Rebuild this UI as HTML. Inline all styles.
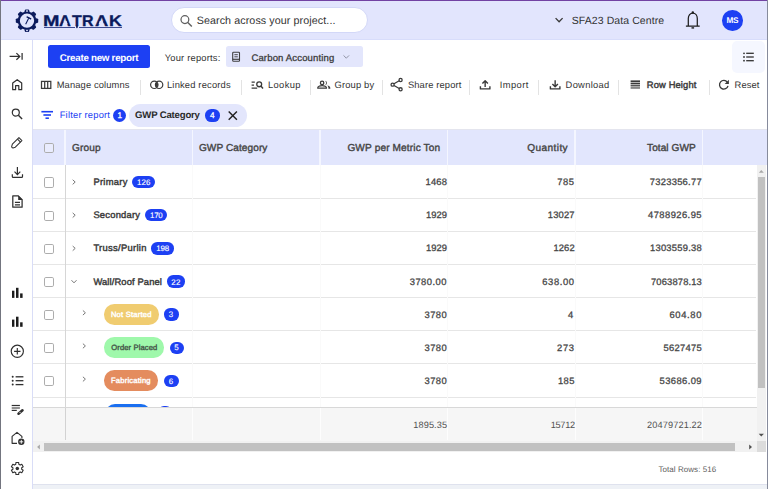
<!DOCTYPE html>
<html><head><meta charset="utf-8"><title>Matrak report</title>
<style>
html,body{margin:0;padding:0;background:#fff;}
body{width:768px;height:489px;position:relative;overflow:hidden;font-family:"Liberation Sans",sans-serif;text-rendering:geometricPrecision;}
.t{position:absolute;white-space:nowrap;}
.b{position:absolute;}
.ov{position:absolute;left:0;top:0;pointer-events:none;}
</style></head><body>
<div class="b" style="left:0px;top:0px;width:768px;height:40px;background:#e2e5fd;"></div>
<div class="b" style="left:0px;top:0px;width:768px;height:1.1px;background:#7242a3;"></div>
<div class="b" style="left:32px;top:40px;width:1px;height:449px;background:#d9ddf7;"></div>
<div class="b" style="left:33px;top:485px;width:735px;height:4px;background:#eef1f6;"></div>
<div class="b" style="left:33px;top:484.3px;width:735px;height:1.0px;background:#dfe2ee;"></div>
<span class="t" style="left:42.91px;top:11px;font-size:15.5px;line-height:22px;font-weight:bold;color:#0b1a5c;-webkit-text-stroke:0.3px #0b1a5c;"><b style="display:inline-block;width:16.43px;transform:scaleX(1.276);transform-origin:0 0">M</b><b style="display:inline-block;width:12.61px;transform:scaleX(1.059);transform-origin:0 0">A</b><b style="display:inline-block;width:10.52px;transform:scaleX(1.032);transform-origin:0 0">T</b><b style="display:inline-block;width:12.12px;transform:scaleX(1.030);transform-origin:0 0">R</b><b style="display:inline-block;width:14.36px;transform:scaleX(1.184);transform-origin:0 0">A</b><b style="display:inline-block;width:16.00px;transform:scaleX(1.150);transform-origin:0 0">K</b></span>
<div class="b" style="left:43.8px;top:26.9px;width:30.799999999999997px;height:1.6000000000000014px;background:#3d4a8f;"></div>
<div class="b" style="left:79px;top:26.9px;width:43.2px;height:1.6000000000000014px;background:#3d4a8f;"></div>
<div class="b" style="left:171px;top:7px;width:197px;height:26px;background:#fff;border:1px solid #d3d8f8;border-radius:13px;box-sizing:border-box"></div>
<span class="t" style="left:196.70px;top:13.00px;font-size:10.7px;line-height:17px;letter-spacing:0.097px;color:#333;">Search across your project...</span>
<div class="b" style="left:0px;top:39px;width:768px;height:1px;background:#d8ddfb;"></div>
<span class="t" style="left:571.70px;top:13.00px;font-size:10.5px;line-height:17px;letter-spacing:0.086px;color:#333;">SFA23 Data Centre</span>
<div class="b" style="left:722px;top:10px;width:20.600px;height:20.600px;border-radius:50%;background:#1d40f3"></div>
<span class="t" style="left:726.40px;top:14.00px;font-size:8.2px;line-height:13px;letter-spacing:-0.100px;color:#fff;font-weight:bold;">MS</span>
<div class="b" style="left:48px;top:45px;width:102px;height:23px;background:#1d40f3;border-radius:2.5px"></div>
<span class="t" style="left:59.80px;top:51.00px;font-size:9.8px;line-height:16px;letter-spacing:-0.289px;color:#fff;font-weight:bold;">Create new report</span>
<span class="t" style="left:164.70px;top:51.00px;font-size:9.35px;line-height:15px;letter-spacing:0.201px;color:#333;">Your reports:</span>
<div class="b" style="left:225.5px;top:46px;width:137.200px;height:21px;background:#e3e6fc;border-radius:2.500px"></div>
<span class="t" style="left:251.40px;top:51.00px;font-size:9.5px;line-height:15px;letter-spacing:0.166px;color:#3a3a3a;-webkit-text-stroke:0.28px #3a3a3a;">Carbon Accounting</span>
<div class="b" style="left:731.8px;top:40.6px;width:33.2px;height:32.6px;background:#f5f7ff;border-radius:5px"></div>
<span class="t" style="left:56.70px;top:78.00px;font-size:9.35px;line-height:15px;letter-spacing:0.129px;color:#333;">Manage columns</span>
<div class="b" style="left:139.8px;top:79.5px;width:1.0px;height:15.0px;background:#e3e3e3;"></div>
<span class="t" style="left:167.00px;top:78.00px;font-size:9.35px;line-height:15px;letter-spacing:0.177px;color:#333;">Linked records</span>
<div class="b" style="left:240.5px;top:79.5px;width:1.0px;height:15.0px;background:#e3e3e3;"></div>
<span class="t" style="left:267.90px;top:78.00px;font-size:9.35px;line-height:15px;letter-spacing:0.388px;color:#333;">Lookup</span>
<div class="b" style="left:309.6px;top:79.5px;width:1.0px;height:15.0px;background:#e3e3e3;"></div>
<span class="t" style="left:334.50px;top:78.00px;font-size:9.35px;line-height:15px;letter-spacing:0.168px;color:#333;">Group by</span>
<div class="b" style="left:382.1px;top:79.5px;width:1.0px;height:15.0px;background:#e3e3e3;"></div>
<span class="t" style="left:407.90px;top:78.00px;font-size:9.35px;line-height:15px;letter-spacing:0.136px;color:#333;">Share report</span>
<div class="b" style="left:468.8px;top:79.5px;width:1.0px;height:15.0px;background:#e3e3e3;"></div>
<span class="t" style="left:499.70px;top:78.00px;font-size:9.35px;line-height:15px;letter-spacing:0.417px;color:#333;">Import</span>
<div class="b" style="left:538.2px;top:79.5px;width:1.0px;height:15.0px;background:#e3e3e3;"></div>
<span class="t" style="left:565.60px;top:78.00px;font-size:9.35px;line-height:15px;letter-spacing:0.290px;color:#333;">Download</span>
<div class="b" style="left:618.0px;top:79.5px;width:1.0px;height:15.0px;background:#e3e3e3;"></div>
<span class="t" style="left:646.80px;top:78.00px;font-size:9.35px;line-height:15px;letter-spacing:0.137px;color:#3a3a3a;-webkit-text-stroke:0.42px #3a3a3a;">Row Height</span>
<div class="b" style="left:709.0px;top:79.5px;width:1.0px;height:15.0px;background:#e3e3e3;"></div>
<span class="t" style="left:734.60px;top:78.00px;font-size:9.35px;line-height:15px;letter-spacing:0.095px;color:#333;">Reset</span>
<span class="t" style="left:59.70px;top:108.00px;font-size:9.35px;line-height:15px;letter-spacing:0.208px;color:#1d40f3;">Filter report</span>
<div class="b" style="left:113.4px;top:108.700px;width:13px;height:13px;border-radius:50%;background:#1d40f3"></div>
<span class="t" style="left:117.60px;top:109.00px;font-size:8.2px;line-height:13px;letter-spacing:-0.460px;color:#fff;-webkit-text-stroke:0.3px #fff;">1</span>
<div class="b" style="left:128.800px;top:103.700px;width:117.900px;height:23.300px;border-radius:11.650px;background:#e3e6fc"></div>
<span class="t" style="left:135.00px;top:108.00px;font-size:9.6px;line-height:15px;letter-spacing:-0.186px;color:#2a2a2a;font-weight:bold;">GWP Category</span>
<div class="b" style="left:204.600px;top:109.100px;width:15.500px;height:12.600px;border-radius:6.300px;background:#1d40f3"></div>
<span class="t" style="left:210.00px;top:109.00px;font-size:8.2px;line-height:13px;letter-spacing:0.940px;color:#fff;-webkit-text-stroke:0.3px #fff;">4</span>
<div class="b" style="left:33px;top:129px;width:733.8px;height:1px;background:#e4e5ee;"></div>
<div class="b" style="left:33px;top:130.3px;width:733.8px;height:34.5px;background:#e2e6fd;"></div>
<div class="b" style="left:64.4px;top:130.2px;width:1.1999999999999886px;height:34.60000000000002px;background:#f4f6ff;"></div>
<div class="b" style="left:191.8px;top:130.2px;width:1.1999999999999886px;height:34.60000000000002px;background:#f4f6ff;"></div>
<div class="b" style="left:319.4px;top:130.2px;width:1.2000000000000455px;height:34.60000000000002px;background:#f4f6ff;"></div>
<div class="b" style="left:446.9px;top:130.2px;width:1.2000000000000455px;height:34.60000000000002px;background:#f4f6ff;"></div>
<div class="b" style="left:574.4px;top:130.2px;width:1.2000000000000455px;height:34.60000000000002px;background:#f4f6ff;"></div>
<div class="b" style="left:701.9px;top:130.2px;width:1.2000000000000455px;height:34.60000000000002px;background:#f4f6ff;"></div>
<div class="b" style="left:44.2px;top:143.10px;width:10.2px;height:10.2px;border:1.25px solid #adadad;border-radius:1.8px;box-sizing:border-box;background:#e9ecfe"></div>
<span class="t" style="left:71.90px;top:141.00px;font-size:10.1px;line-height:16px;letter-spacing:0.146px;color:#454545;-webkit-text-stroke:0.38px #454545;">Group</span>
<span class="t" style="left:198.90px;top:141.00px;font-size:10.1px;line-height:16px;letter-spacing:0.073px;color:#454545;-webkit-text-stroke:0.38px #454545;">GWP Category</span>
<span class="t" style="left:347.40px;top:141.00px;font-size:10.1px;line-height:16px;letter-spacing:0.131px;color:#454545;-webkit-text-stroke:0.38px #454545;">GWP per Metric Ton</span>
<span class="t" style="left:527.20px;top:141.00px;font-size:10.1px;line-height:16px;letter-spacing:0.411px;color:#454545;-webkit-text-stroke:0.38px #454545;">Quantity</span>
<span class="t" style="left:647.10px;top:141.00px;font-size:10.1px;line-height:16px;letter-spacing:0.048px;color:#454545;-webkit-text-stroke:0.38px #454545;">Total GWP</span>
<div class="b" style="left:33px;top:197.56px;width:723px;height:1.0px;background:#e6e6e6;"></div>
<div class="b" style="left:33px;top:230.72px;width:723px;height:1.0px;background:#e6e6e6;"></div>
<div class="b" style="left:33px;top:263.88px;width:723px;height:1.0px;background:#e6e6e6;"></div>
<div class="b" style="left:33px;top:297.03999999999996px;width:723px;height:1.0px;background:#e6e6e6;"></div>
<div class="b" style="left:33px;top:330.2px;width:723px;height:1.0px;background:#e6e6e6;"></div>
<div class="b" style="left:33px;top:363.36px;width:723px;height:1.0px;background:#e6e6e6;"></div>
<div class="b" style="left:33px;top:396.52px;width:723px;height:1.0px;background:#e6e6e6;"></div>
<div class="b" style="left:64.5px;top:164.8px;width:1.0px;height:242.5px;background:#d6d6d6;"></div>
<div class="b" style="left:191.9px;top:164.8px;width:1.0px;height:242.5px;background:#fafafa;"></div>
<div class="b" style="left:319.5px;top:164.8px;width:1.0px;height:242.5px;background:#fafafa;"></div>
<div class="b" style="left:447.0px;top:164.8px;width:1.0px;height:242.5px;background:#fafafa;"></div>
<div class="b" style="left:574.5px;top:164.8px;width:1.0px;height:242.5px;background:#fafafa;"></div>
<div class="b" style="left:702.0px;top:164.8px;width:1.0px;height:242.5px;background:#fafafa;"></div>
<div class="b" style="left:44.2px;top:177.35px;width:10.2px;height:10.2px;border:1.25px solid #adadad;border-radius:1.8px;box-sizing:border-box;background:#fff"></div>
<span class="t" style="left:93.40px;top:174.00px;font-size:9.4px;line-height:15px;letter-spacing:0.289px;color:#3a3a3a;-webkit-text-stroke:0.42px #3a3a3a;">Primary</span>
<div class="b" style="left:132.3px;top:175.70px;width:22.90px;height:12.5px;border-radius:6.25px;background:#1d40f3"></div>
<span class="t" style="left:136.90px;top:176.00px;font-size:7.9px;line-height:13px;letter-spacing:0.140px;color:#fff;-webkit-text-stroke:0.12px #fff;">126</span>
<span class="t" style="left:425.50px;top:174.00px;font-size:9.4px;line-height:15px;letter-spacing:0.173px;color:#464646;-webkit-text-stroke:0.3px #464646;">1468</span>
<span class="t" style="left:557.30px;top:174.00px;font-size:9.4px;line-height:15px;letter-spacing:0.573px;color:#464646;-webkit-text-stroke:0.3px #464646;">785</span>
<span class="t" style="left:649.70px;top:174.00px;font-size:9.4px;line-height:15px;letter-spacing:0.274px;color:#464646;-webkit-text-stroke:0.3px #464646;">7323356.77</span>
<div class="b" style="left:44.2px;top:210.51px;width:10.2px;height:10.2px;border:1.25px solid #adadad;border-radius:1.8px;box-sizing:border-box;background:#fff"></div>
<span class="t" style="left:93.40px;top:207.00px;font-size:9.4px;line-height:15px;letter-spacing:0.218px;color:#3a3a3a;-webkit-text-stroke:0.42px #3a3a3a;">Secondary</span>
<div class="b" style="left:145.2px;top:208.86px;width:22.20px;height:12.5px;border-radius:6.25px;background:#1d40f3"></div>
<span class="t" style="left:150.10px;top:209.00px;font-size:7.9px;line-height:13px;letter-spacing:-0.293px;color:#fff;-webkit-text-stroke:0.12px #fff;">170</span>
<span class="t" style="left:426.00px;top:207.00px;font-size:9.4px;line-height:15px;letter-spacing:0.048px;color:#464646;-webkit-text-stroke:0.3px #464646;">1929</span>
<span class="t" style="left:547.80px;top:207.00px;font-size:9.4px;line-height:15px;letter-spacing:0.153px;color:#464646;-webkit-text-stroke:0.3px #464646;">13027</span>
<span class="t" style="left:648.00px;top:207.00px;font-size:9.4px;line-height:15px;letter-spacing:0.444px;color:#464646;-webkit-text-stroke:0.3px #464646;">4788926.95</span>
<div class="b" style="left:44.2px;top:243.67px;width:10.2px;height:10.2px;border:1.25px solid #adadad;border-radius:1.8px;box-sizing:border-box;background:#fff"></div>
<span class="t" style="left:93.40px;top:240.00px;font-size:9.4px;line-height:15px;letter-spacing:0.301px;color:#3a3a3a;-webkit-text-stroke:0.42px #3a3a3a;">Truss/Purlin</span>
<div class="b" style="left:151.4px;top:242.02px;width:22.40px;height:12.5px;border-radius:6.25px;background:#1d40f3"></div>
<span class="t" style="left:156.20px;top:242.00px;font-size:7.9px;line-height:13px;letter-spacing:-0.160px;color:#fff;-webkit-text-stroke:0.12px #fff;">198</span>
<span class="t" style="left:426.00px;top:240.00px;font-size:9.4px;line-height:15px;letter-spacing:0.048px;color:#464646;-webkit-text-stroke:0.3px #464646;">1929</span>
<span class="t" style="left:553.60px;top:240.00px;font-size:9.4px;line-height:15px;letter-spacing:0.048px;color:#464646;-webkit-text-stroke:0.3px #464646;">1262</span>
<span class="t" style="left:650.00px;top:240.00px;font-size:9.4px;line-height:15px;letter-spacing:0.244px;color:#464646;-webkit-text-stroke:0.3px #464646;">1303559.38</span>
<div class="b" style="left:44.2px;top:276.83px;width:10.2px;height:10.2px;border:1.25px solid #adadad;border-radius:1.8px;box-sizing:border-box;background:#fff"></div>
<span class="t" style="left:93.40px;top:274.00px;font-size:9.4px;line-height:15px;letter-spacing:0.117px;color:#3a3a3a;-webkit-text-stroke:0.42px #3a3a3a;">Wall/Roof Panel</span>
<div class="b" style="left:166.7px;top:275.18px;width:18.70px;height:12.5px;border-radius:6.25px;background:#1d40f3"></div>
<span class="t" style="left:171.15px;top:276.00px;font-size:7.9px;line-height:13px;letter-spacing:0.457px;color:#fff;-webkit-text-stroke:0.12px #fff;">22</span>
<span class="t" style="left:409.70px;top:274.00px;font-size:9.4px;line-height:15px;letter-spacing:0.489px;color:#464646;-webkit-text-stroke:0.3px #464646;">3780.00</span>
<span class="t" style="left:542.30px;top:274.00px;font-size:9.4px;line-height:15px;letter-spacing:0.609px;color:#464646;-webkit-text-stroke:0.3px #464646;">638.00</span>
<span class="t" style="left:651.00px;top:274.00px;font-size:9.4px;line-height:15px;letter-spacing:0.144px;color:#464646;-webkit-text-stroke:0.3px #464646;">7063878.13</span>
<div class="b" style="left:44.2px;top:309.99px;width:10.2px;height:10.2px;border:1.25px solid #adadad;border-radius:1.8px;box-sizing:border-box;background:#fff"></div>
<div class="b" style="left:103.7px;top:304.09px;width:55.80px;height:20.6px;border-radius:10.3px;background:#f0cc70"></div>
<span class="t" style="left:110.90px;top:309.00px;font-size:7.6px;line-height:12px;letter-spacing:0.215px;color:#fff;-webkit-text-stroke:0.4px #fff;">Not Started</span>
<div class="b" style="left:164px;top:308.49px;width:15.00px;height:12.4px;border-radius:6.2px;background:#1d40f3"></div>
<span class="t" style="left:168.80px;top:308.00px;font-size:7.9px;line-height:13px;letter-spacing:0.907px;color:#fff;-webkit-text-stroke:0.12px #fff;">3</span>
<span class="t" style="left:424.50px;top:307.00px;font-size:9.4px;line-height:15px;letter-spacing:0.423px;color:#464646;-webkit-text-stroke:0.3px #464646;">3780</span>
<span class="t" style="left:568.10px;top:307.00px;font-size:9.4px;line-height:15px;letter-spacing:1.373px;color:#464646;-webkit-text-stroke:0.3px #464646;">4</span>
<span class="t" style="left:669.50px;top:307.00px;font-size:9.4px;line-height:15px;letter-spacing:0.642px;color:#464646;-webkit-text-stroke:0.3px #464646;">604.80</span>
<div class="b" style="left:44.2px;top:343.15px;width:10.2px;height:10.2px;border:1.25px solid #adadad;border-radius:1.8px;box-sizing:border-box;background:#fff"></div>
<div class="b" style="left:103.7px;top:337.25px;width:60.80px;height:20.6px;border-radius:10.3px;background:#9ff8ab"></div>
<span class="t" style="left:111.20px;top:342.00px;font-size:7.6px;line-height:12px;letter-spacing:0.127px;color:#46584a;-webkit-text-stroke:0.4px #46584a;">Order Placed</span>
<div class="b" style="left:169.5px;top:341.65px;width:14.70px;height:12.4px;border-radius:6.2px;background:#1d40f3"></div>
<span class="t" style="left:174.15px;top:341.00px;font-size:7.9px;line-height:13px;letter-spacing:0.907px;color:#fff;-webkit-text-stroke:0.12px #fff;">5</span>
<span class="t" style="left:424.50px;top:340.00px;font-size:9.4px;line-height:15px;letter-spacing:0.423px;color:#464646;-webkit-text-stroke:0.3px #464646;">3780</span>
<span class="t" style="left:557.10px;top:340.00px;font-size:9.4px;line-height:15px;letter-spacing:0.639px;color:#464646;-webkit-text-stroke:0.3px #464646;">273</span>
<span class="t" style="left:663.50px;top:340.00px;font-size:9.4px;line-height:15px;letter-spacing:0.287px;color:#464646;-webkit-text-stroke:0.3px #464646;">5627475</span>
<div class="b" style="left:44.2px;top:376.31px;width:10.2px;height:10.2px;border:1.25px solid #adadad;border-radius:1.8px;box-sizing:border-box;background:#fff"></div>
<div class="b" style="left:103.7px;top:370.41px;width:54.70px;height:20.6px;border-radius:10.3px;background:#e48c5e"></div>
<span class="t" style="left:111.00px;top:375.00px;font-size:7.6px;line-height:12px;letter-spacing:0.201px;color:#fff;-webkit-text-stroke:0.4px #fff;">Fabricating</span>
<div class="b" style="left:163.9px;top:374.81px;width:15.00px;height:12.4px;border-radius:6.2px;background:#1d40f3"></div>
<span class="t" style="left:168.70px;top:375.00px;font-size:7.9px;line-height:13px;letter-spacing:0.907px;color:#fff;-webkit-text-stroke:0.12px #fff;">6</span>
<span class="t" style="left:424.50px;top:373.00px;font-size:9.4px;line-height:15px;letter-spacing:0.423px;color:#464646;-webkit-text-stroke:0.3px #464646;">3780</span>
<span class="t" style="left:558.10px;top:373.00px;font-size:9.4px;line-height:15px;letter-spacing:0.306px;color:#464646;-webkit-text-stroke:0.3px #464646;">185</span>
<span class="t" style="left:659.50px;top:373.00px;font-size:9.4px;line-height:15px;letter-spacing:0.425px;color:#464646;-webkit-text-stroke:0.3px #464646;">53686.09</span>
<div class="b" style="left:104.7px;top:403.6px;width:46px;height:20px;border-radius:10px;background:#1a6ff0"></div>
<div class="b" style="left:157.5px;top:406.2px;width:14px;height:11.5px;border-radius:6px;background:#1d40f3"></div>
<div class="b" style="left:33px;top:407.6px;width:723.5px;height:33.39999999999998px;background:#f6f6f6;"></div>
<div class="b" style="left:33px;top:407px;width:723.5px;height:1px;background:#d8d8d8;"></div>
<div class="b" style="left:64.5px;top:407.5px;width:1.0px;height:32.80000000000001px;background:#d2d2d2;"></div>
<div class="b" style="left:191.9px;top:407.5px;width:1.0px;height:32.80000000000001px;background:#fdfdfd;"></div>
<div class="b" style="left:319.5px;top:407.5px;width:1.0px;height:32.80000000000001px;background:#fdfdfd;"></div>
<div class="b" style="left:447.0px;top:407.5px;width:1.0px;height:32.80000000000001px;background:#fdfdfd;"></div>
<div class="b" style="left:574.5px;top:407.5px;width:1.0px;height:32.80000000000001px;background:#fdfdfd;"></div>
<div class="b" style="left:702.0px;top:407.5px;width:1.0px;height:32.80000000000001px;background:#fdfdfd;"></div>
<span class="t" style="left:413.20px;top:418.00px;font-size:9.2px;line-height:15px;letter-spacing:0.121px;color:#505050;">1895.35</span>
<span class="t" style="left:550.70px;top:418.00px;font-size:9.2px;line-height:15px;letter-spacing:-0.296px;color:#505050;">15712</span>
<span class="t" style="left:647.00px;top:418.00px;font-size:9.2px;line-height:15px;letter-spacing:0.126px;color:#505050;">20479721.22</span>
<div class="b" style="left:756.5px;top:165px;width:9.5px;height:276px;background:#f1f1f1;"></div>
<div class="b" style="left:757.7px;top:176.7px;width:7.2999999999999545px;height:211.10000000000002px;background:#c1c1c1;"></div>
<div class="b" style="left:33px;top:441px;width:724px;height:11px;background:#f1f1f1;"></div>
<div class="b" style="left:44px;top:443px;width:691.4px;height:8px;background:#c1c1c1;"></div>
<div class="b" style="left:757px;top:441px;width:9px;height:11px;background:#dcdcdc;"></div>
<span class="t" style="left:658.40px;top:463.00px;font-size:8px;line-height:13px;letter-spacing:0.066px;color:#5c5c5c;">Total Rows: 516</span>
<div class="b" style="left:0px;top:0px;width:1.1px;height:489px;background:#73757f;"></div>
<div class="b" style="left:766.8px;top:0px;width:1.2000000000000455px;height:489px;background:#868b9c;"></div>
<svg class="ov" width="768" height="489" viewBox="0 0 768 489">
<g transform="translate(27.00 20.70) scale(0.9417)" fill="#2b2b2b"><circle r="8.75" fill="none" stroke="#0b1a5c" stroke-width="2.3"/><path d="M-2.9 -9.1L-2.2 -11.4Q-2 -11.9 -1.5 -11.9H1.5Q2 -11.9 2.2 -11.4L2.9 -9.1Z" fill="#0b1a5c" transform="rotate(0)"/><path d="M-2.9 -9.1L-2.2 -11.4Q-2 -11.9 -1.5 -11.9H1.5Q2 -11.9 2.2 -11.4L2.9 -9.1Z" fill="#0b1a5c" transform="rotate(45)"/><path d="M-2.9 -9.1L-2.2 -11.4Q-2 -11.9 -1.5 -11.9H1.5Q2 -11.9 2.2 -11.4L2.9 -9.1Z" fill="#0b1a5c" transform="rotate(90)"/><path d="M-2.9 -9.1L-2.2 -11.4Q-2 -11.9 -1.5 -11.9H1.5Q2 -11.9 2.2 -11.4L2.9 -9.1Z" fill="#0b1a5c" transform="rotate(135)"/><path d="M-2.9 -9.1L-2.2 -11.4Q-2 -11.9 -1.5 -11.9H1.5Q2 -11.9 2.2 -11.4L2.9 -9.1Z" fill="#0b1a5c" transform="rotate(180)"/><path d="M-2.9 -9.1L-2.2 -11.4Q-2 -11.9 -1.5 -11.9H1.5Q2 -11.9 2.2 -11.4L2.9 -9.1Z" fill="#0b1a5c" transform="rotate(225)"/><path d="M-2.9 -9.1L-2.2 -11.4Q-2 -11.9 -1.5 -11.9H1.5Q2 -11.9 2.2 -11.4L2.9 -9.1Z" fill="#0b1a5c" transform="rotate(270)"/><path d="M-2.9 -9.1L-2.2 -11.4Q-2 -11.9 -1.5 -11.9H1.5Q2 -11.9 2.2 -11.4L2.9 -9.1Z" fill="#0b1a5c" transform="rotate(315)"/><rect x="-0.9" y="-11.2" width="1.8" height="1.700" rx="0.400" fill="#e2e5fd"/><rect x="-0.900" y="9.500" width="1.800" height="1.700" rx="0.400" fill="#e2e5fd"/><g transform="translate(0.6 -0.2) rotate(27)"><rect x="-0.55" y="-2.6" width="1.1" height="7" fill="#0b1a5c"/><rect x="-2.7" y="-3.9" width="5.4" height="1.6" rx="0.3" fill="#0b1a5c"/></g></g>
<polygon points="62.98,23.98 67.55,23.98 66.66,21.01 63.89,21.01" fill="#e2e5fd"/>
<polygon points="98.67,23.98 103.77,23.98 102.78,21.01 99.68,21.01" fill="#e2e5fd"/>
<path d="M75.9 25.5h2.100l-0.300 1.800l-0.750 1.200l-0.750-1.200z" fill="#0b1a5c"/>
<g fill="none" stroke="#5f5f5f" stroke-width="1.25"><circle cx="184.9" cy="19.6" r="3.9"/><path d="M187.8 22.6l4 4" stroke-width="1.4"/></g>
<path d="M555.6 18.1l3.5 3.6 3.5-3.6" fill="none" stroke="#3a3a3a" stroke-width="1.35"/>
<g fill="none" stroke="#1f1f1f" stroke-width="1.25" stroke-linejoin="round"><path d="M685.9 26.2h13.800M688.300 26.200v-7.800c0-3.100 1.900-5.300 4.500-5.300s4.500 2.200 4.500 5.300v7.800"/><path d="M691.500 27.900h2.600" stroke-width="1.400"/><circle cx="692.800" cy="12.500" r="0.600" fill="#1f1f1f"/></g>
<g fill="none" stroke="#303030" stroke-width="1.25" ><path d="M9.6 56.4h10.2M16.4 53.1l3.4 3.3-3.4 3.3M22.1 53v6.8"/></g>
<g fill="none" stroke="#303030" stroke-width="1.2" ><path d="M12.7 89.7v-6.6l4.5-3.4 4.5 3.4v6.6h-2.9v-4h-3.2v4z" stroke-linejoin="round"/></g>
<g fill="none" stroke="#303030" stroke-width="1.2" ><circle cx="15.8" cy="112.6" r="3.5"/><path d="M18.4 115.300l3.700 3.800" stroke-width="1.400"/></g>
<g fill="none" stroke="#303030" stroke-width="1.05" ><g transform="translate(16.25 143.3) rotate(-45)"><path d="M-3.4 -2.1H5.9V2.1H-3.4L-5.6 0.900Q-6.300 0 -5.600 -0.900Z" stroke-linejoin="round"/><path d="M3.900 -2.100V2.100"/></g></g>
<g fill="none" stroke="#303030" stroke-width="1.2" ><path d="M12.300 174.300v2.100q0 0.900 0.900 0.900h8.400q0.900 0 0.900-0.900v-2.100" stroke-linejoin="round"/><path d="M17.400 166.900v7.400M14.500 171.700l2.900 2.900 2.900-2.900"/></g>
<g fill="none" stroke="#303030" stroke-width="1.25" ><path d="M12.800 195.900h5.500l3.800 3.800v7.500h-9.300z" stroke-linejoin="round"/><path d="M14.900 202.300h5.100M14.900 204.900h5.100" stroke-width="1.300"/></g>
<path d="M18.200 195.500l4.500 4.500h-4.500z" fill="#303030"/>
<g fill="#1c1c1c"><rect x="12" y="290.7" width="2.400" height="7.200"/><rect x="16" y="287.8" width="2.500" height="10.100"/><rect x="20.100" y="293.4" width="2.500" height="4.500"/></g>
<g fill="#1c1c1c"><rect x="12" y="319.6" width="2.400" height="7.200"/><rect x="16" y="316.7" width="2.500" height="10.100"/><rect x="20.100" y="322.3" width="2.500" height="4.500"/></g>
<g fill="none" stroke="#303030" stroke-width="1.15" ><circle cx="17.300" cy="351.300" r="6.100"/><path d="M14.100 351.300h6.400M17.300 348.100v6.400"/></g>
<g fill="#303030"><circle cx="12.700" cy="376.800" r="1"/><circle cx="12.700" cy="380.700" r="1"/><circle cx="12.700" cy="384.600" r="1"/><rect x="15.600" y="376.150" width="7.800" height="1.300"/><rect x="15.600" y="380.050" width="7.800" height="1.300"/><rect x="15.600" y="383.950" width="7.800" height="1.300"/></g>
<g fill="#303030"><rect x="11.700" y="404.900" width="8.200" height="1.200"/><rect x="11.700" y="407.300" width="8.200" height="1.400" opacity="0.750"/><rect x="11.700" y="409.800" width="5.100" height="1.200"/></g>
<g transform="translate(20.500 412) rotate(-40)"><rect x="-3.900" y="-1.300" width="7.800" height="2.600" rx="1.300" fill="#303030"/><circle cx="-0.600" cy="0" r="0.550" fill="#fff"/></g>
<g fill="none" stroke="#303030" stroke-width="1.15" ><path d="M17 443.300h-4.900v-6.900l4.900-4 4.900 4v1.700" stroke-linejoin="round"/></g>
<circle cx="21.300" cy="441.800" r="3.200" fill="#303030"/><path d="M21.300 439.900v3.800M19.400 441.800h3.800" stroke="#fff" stroke-width="0.900"/>
<g fill="none" stroke="#303030" stroke-width="1.1" ><path d="M15.78 464.32L15.92 462.51L18.68 462.51L18.82 464.32L20.16 465.09L21.80 464.31L23.18 466.70L21.68 467.73L21.68 469.27L23.18 470.30L21.80 472.69L20.16 471.91L18.82 472.68L18.68 474.49L15.92 474.49L15.78 472.68L14.44 471.91L12.80 472.69L11.42 470.30L12.92 469.27L12.92 467.73L11.42 466.70L12.80 464.31L14.44 465.09Z" stroke-linejoin="round"/></g>
<circle cx="17.3" cy="468.5" r="1.75" fill="#303030"/>
<g fill="none" stroke="#3f3f3f" stroke-width="1.100"><rect x="232.700" y="52.300" width="6.800" height="9" rx="0.800"/><path d="M234.400 54.700h3.400M234.400 56.800h3.400" stroke-width="0.950"/><path d="M232.700 59.300h6.800" stroke-width="1.150"/></g>
<g transform="translate(341.55 52.05) scale(0.3958)" fill="#2b2b2b"><path d="M5 8.500l7 7 7-7" fill="none" stroke="#8b8ea0" stroke-width="2.400"/></g>
<g fill="#333"><circle cx="744" cy="53.300" r="0.900"/><circle cx="744" cy="57" r="0.900"/><circle cx="744" cy="60.700" r="0.900"/><rect x="746.200" y="52.650" width="7.600" height="1.300"/><rect x="746.200" y="56.350" width="7.600" height="1.300"/><rect x="746.200" y="60.050" width="7.600" height="1.300"/></g>
<g fill="none" stroke="#3a3a3a" stroke-width="1.25"><rect x="41.5" y="81.4" width="9.3" height="7" /><path d="M44.7 81.4v7M47.7 81.4v7"/></g>
<g fill="none" stroke="#3a3a3a" stroke-width="1.2"><circle cx="154.3" cy="84.8" r="3.7"/><circle cx="159.1" cy="84.8" r="3.7"/></g><path d="M156.7 81.95a3.7 3.7 0 0 1 0 5.7a3.7 3.7 0 0 1 0 -5.7z" fill="#3a3a3a"/>
<g fill="none" stroke="#3a3a3a" stroke-width="1.3"><path d="M251.6 82.2h3.2M251.6 85.2h2.4M251.6 88.200h5.600"/><circle cx="259.200" cy="84.300" r="2.450"/><path d="M260.900 86.100l2.100 2.300" stroke-width="1.450"/></g>
<g fill="none" stroke="#3a3a3a" stroke-width="1.3"><circle cx="322.100" cy="82.900" r="1.700"/><path d="M317.800 88.200v-0.400c0-1.500 2.900-2.200 4.300-2.200s4.300 0.700 4.300 2.200v0.400z" stroke-linejoin="round"/></g><path d="M325.300 80.700a2.300 2.300 0 0 1 0 4.400a3.400 3.400 0 0 0 0-4.400zM327.200 85.300c1.700 0.400 3.100 1.200 3.100 2.600v0.900h-1.900v-0.900c0-1.100-0.500-1.900-1.200-2.600z" fill="#3a3a3a"/>
<g fill="none" stroke="#3a3a3a" stroke-width="1.3"><path d="M394 83.800l5.200-3M394 85.500l5.200 3"/><circle cx="392.600" cy="84.650" r="1.550"/><circle cx="400.600" cy="80" r="1.550"/><circle cx="400.600" cy="89.300" r="1.550"/></g>
<g fill="none" stroke="#3a3a3a" stroke-width="1.4" stroke-linejoin="round"><path d="M480.400 86.300v2.600h9.500v-2.600"/><path d="M485.150 87v-6.300M482.400 83.400l2.750-2.750 2.750 2.750"/></g>
<g fill="none" stroke="#3a3a3a" stroke-width="1.4" stroke-linejoin="round"><path d="M550.400 86.300v2.600h9.500v-2.600"/><path d="M555.150 80.300v6.300M552.400 83.900l2.750 2.750 2.750-2.750"/></g>
<g fill="#3a3a3a"><rect x="630.600" y="80.400" width="9.400" height="1.700"/><rect x="630.600" y="82.700" width="9.400" height="1.700"/><rect x="630.600" y="85" width="9.400" height="1.500" opacity="0.850"/><rect x="630.600" y="87.200" width="9.400" height="1.500" opacity="0.750"/></g>
<g fill="none" stroke="#3a3a3a" stroke-width="1.300"><path d="M727.300 82.200a4.300 4.300 0 1 0 0.700 3.600"/></g><path d="M728.900 79.800v4.200h-4.200z" fill="#3a3a3a"/>
<g fill="#1d40f3"><rect x="41.4" y="110.9" width="11.6" height="1.6"/><rect x="43.4" y="114.2" width="7.600" height="1.600"/><rect x="45.500" y="117.400" width="3.400" height="1.600"/></g>
<path d="M228.700 111.500l8.200 8.200M236.900 111.500l-8.200 8.200" stroke="#222" stroke-width="1.450" fill="none"/>
<path d="M72.70 179.75l2.5 2.3-2.5 2.3" fill="none" stroke="#777" stroke-width="1"/>
<path d="M72.70 212.91l2.5 2.3-2.5 2.3" fill="none" stroke="#777" stroke-width="1"/>
<path d="M72.70 246.07l2.5 2.3-2.5 2.3" fill="none" stroke="#777" stroke-width="1"/>
<path d="M71.50 280.23l2.5 2.6 2.5-2.6" fill="none" stroke="#777" stroke-width="1"/>
<path d="M82.90 310.49l2.5 2.3-2.5 2.3" fill="none" stroke="#777" stroke-width="1"/>
<path d="M82.90 343.65l2.5 2.3-2.5 2.3" fill="none" stroke="#777" stroke-width="1"/>
<path d="M82.90 376.81l2.5 2.3-2.5 2.3" fill="none" stroke="#777" stroke-width="1"/>
<path d="M758.8 172.8l2.5-2.800 2.5 2.800z" fill="#a8a8a8"/>
<path d="M758.700 433.700l2.600 2.900 2.600-2.900z" fill="#505050"/>
<path d="M39.900 444.400l-2.800 2.600 2.800 2.600z" fill="#a8a8a8"/>
<path d="M749.200 444.400l2.800 2.600-2.800 2.600z" fill="#505050"/>
</svg>
</body></html>
